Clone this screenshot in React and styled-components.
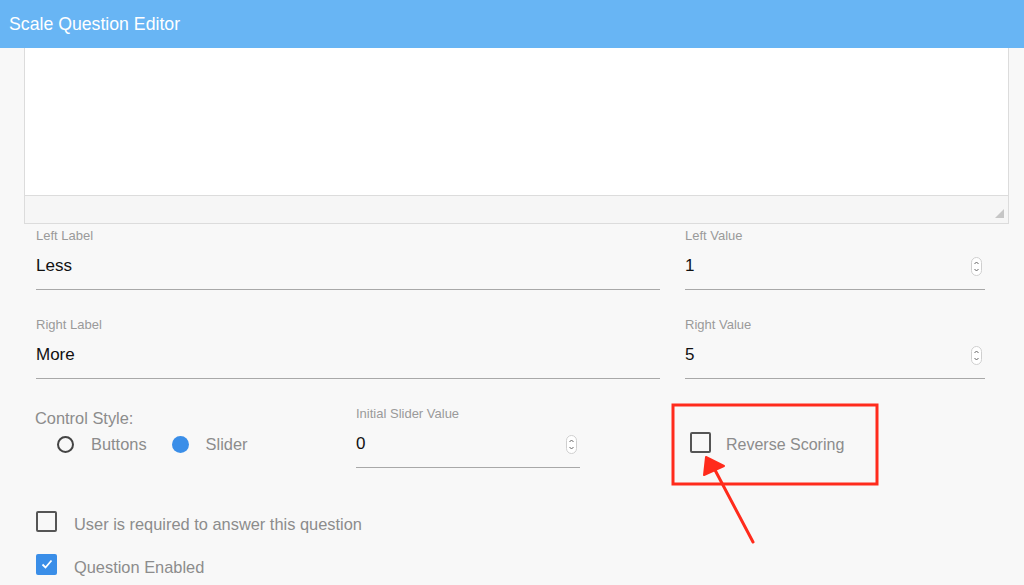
import React from "react";
import styled, { createGlobalStyle } from "styled-components";

const Global = createGlobalStyle`
  html, body { margin: 0; padding: 0; }
  body { font-family: "Liberation Sans", Arial, sans-serif; background: #f8f8f8; }
`;

const Page = styled.div`
  position: relative;
  width: 1024px;
  height: 585px;
  overflow: hidden;
  background: #f8f8f8;
`;

const Header = styled.header`
  height: 48px;
  background: #68b5f4;
  color: #fff;
  display: flex;
  align-items: center;
  padding-left: 9px;
  font-size: 17.7px;
`;

const Editor = styled.div`
  margin: 0 15px 0 24px;
  border: 1px solid #dcdcdc;
  border-top: none;
  display: flex;
  flex-direction: column;
`;

const EditArea = styled.div`
  height: 147px;
  background: #fff;
`;

const StatusBar = styled.div`
  box-sizing: border-box;
  height: 28px;
  border-top: 1px solid #dcdcdc;
  background: #f6f6f6;
  display: flex;
  justify-content: flex-end;
  align-items: flex-end;
  padding: 0 4px 5px 0;
`;

const Grip = styled.div`
  width: 0;
  height: 0;
  border-left: 9px solid transparent;
  border-bottom: 9px solid #c6c6c6;
`;

const Form = styled.div`
  padding: 4px 39px 0 36px;
  display: grid;
  grid-template-columns: 624px 300px;
  column-gap: 25px;
  row-gap: 27px;
`;

const Field = styled.div`
  display: flex;
  flex-direction: column;
  width: ${(p) => p.width || "auto"};
`;

const FieldLabel = styled.div`
  font-size: 13px;
  line-height: 16px;
  color: #9a9a9a;
`;

const InputRow = styled.div`
  height: 46px;
  box-sizing: border-box;
  padding: 0 3px 1px 0;
  display: flex;
  align-items: center;
  justify-content: space-between;
  border-bottom: 1px solid #a8a8a8;
  font-size: 17px;
  color: #111;
`;

const ControlRow = styled.div`
  display: flex;
  align-items: flex-start;
`;

const ControlStyle = styled.div`
  width: 321px;
  padding-top: 4px;
  margin-left: -1px;
`;

const ControlTitle = styled.div`
  font-size: 16.4px;
  line-height: 16px;
  color: #8c8c8c;
`;

const RadioGroup = styled.div`
  display: flex;
  align-items: center;
  margin-top: 9px;
  margin-left: 22px;
`;

const RadioItem = styled.label`
  display: flex;
  align-items: center;
  gap: 17px;
  margin-right: 25px;
  font-size: 16.4px;
  line-height: 18px;
  color: #8c8c8c;
`;

const Radio = styled.span`
  box-sizing: border-box;
  width: 17px;
  height: 17px;
  border-radius: 50%;
  border: ${(p) => (p.checked ? "none" : "2px solid #444")};
  background: ${(p) => (p.checked ? "#3a8ee8" : "transparent")};
`;

const CheckRow = styled.label`
  display: flex;
  align-items: center;
  gap: ${(p) => p.gap || "17px"};
  font-size: ${(p) => p.size || "16.4px"};
  line-height: 18px;
  color: #8c8c8c;
`;

const Box = styled.span`
  box-sizing: border-box;
  width: 21px;
  height: 21px;
  border-radius: 2px;
  border: ${(p) => (p.checked ? "none" : "2px solid #555")};
  background: ${(p) => (p.checked ? "#3a8ee8" : "transparent")};
  display: flex;
  align-items: center;
  justify-content: center;
  margin-top: -6px;
`;

const ReverseCell = styled.div`
  padding-top: 30px;
  padding-left: 5px;
`;

const Checks = styled.div`
  grid-column: 1 / span 2;
  display: flex;
  flex-direction: column;
  gap: 25px;
  margin-top: 20px;
`;

const Overlay = styled.svg`
  position: absolute;
  left: 0;
  top: 0;
  pointer-events: none;
`;

const Spinner = () => (
  <svg width="11" height="19" viewBox="0 0 11 19">
    <rect x="0.5" y="0.5" width="10" height="18" rx="5" fill="#fff" stroke="#cfcfcf" />
    <path d="M3.5 7 L5.5 5 L7.5 7" fill="none" stroke="#666" strokeWidth="1" />
    <path d="M3.5 12 L5.5 14 L7.5 12" fill="none" stroke="#666" strokeWidth="1" />
  </svg>
);

const Check = () => (
  <svg width="14" height="14" viewBox="0 0 14 14">
    <path d="M2.5 7.5 L5.5 10.5 L11.5 3.5" fill="none" stroke="#fff" strokeWidth="1.8" />
  </svg>
);

function TextField({ label, value, spinner, width }) {
  return (
    <Field width={width}>
      <FieldLabel>{label}</FieldLabel>
      <InputRow>
        <span>{value}</span>
        {spinner && <Spinner />}
      </InputRow>
    </Field>
  );
}

export default function App() {
  return (
    <Page>
      <Global />
      <Header>Scale Question Editor</Header>
      <Editor>
        <EditArea />
        <StatusBar>
          <Grip />
        </StatusBar>
      </Editor>
      <Form>
        <TextField label="Left Label" value="Less" />
        <TextField label="Left Value" value="1" spinner />
        <TextField label="Right Label" value="More" />
        <TextField label="Right Value" value="5" spinner />
        <ControlRow>
          <ControlStyle>
            <ControlTitle>Control Style:</ControlTitle>
            <RadioGroup>
              <RadioItem>
                <Radio />
                Buttons
              </RadioItem>
              <RadioItem>
                <Radio checked />
                Slider
              </RadioItem>
            </RadioGroup>
          </ControlStyle>
          <TextField label="Initial Slider Value" value="0" spinner width="224px" />
        </ControlRow>
        <ReverseCell>
          <CheckRow size="16px" gap="15px">
            <Box />
            Reverse Scoring
          </CheckRow>
        </ReverseCell>
        <Checks>
          <CheckRow>
            <Box />
            User is required to answer this question
          </CheckRow>
          <CheckRow>
            <Box checked>
              <Check />
            </Box>
            Question Enabled
          </CheckRow>
        </Checks>
      </Form>
      <Overlay width="1024" height="585" viewBox="0 0 1024 585">
        <rect x="673" y="405" width="204" height="79" fill="none" stroke="#ff2b1c" strokeWidth="3" />
        <path d="M753 542 L715 470" stroke="#ff2b1c" strokeWidth="3" fill="none" strokeLinecap="round" />
        <path d="M706 457 L704 475 L724 466 Z" fill="#ff2b1c" stroke="#ff2b1c" strokeWidth="2" strokeLinejoin="round" />
      </Overlay>
    </Page>
  );
}
